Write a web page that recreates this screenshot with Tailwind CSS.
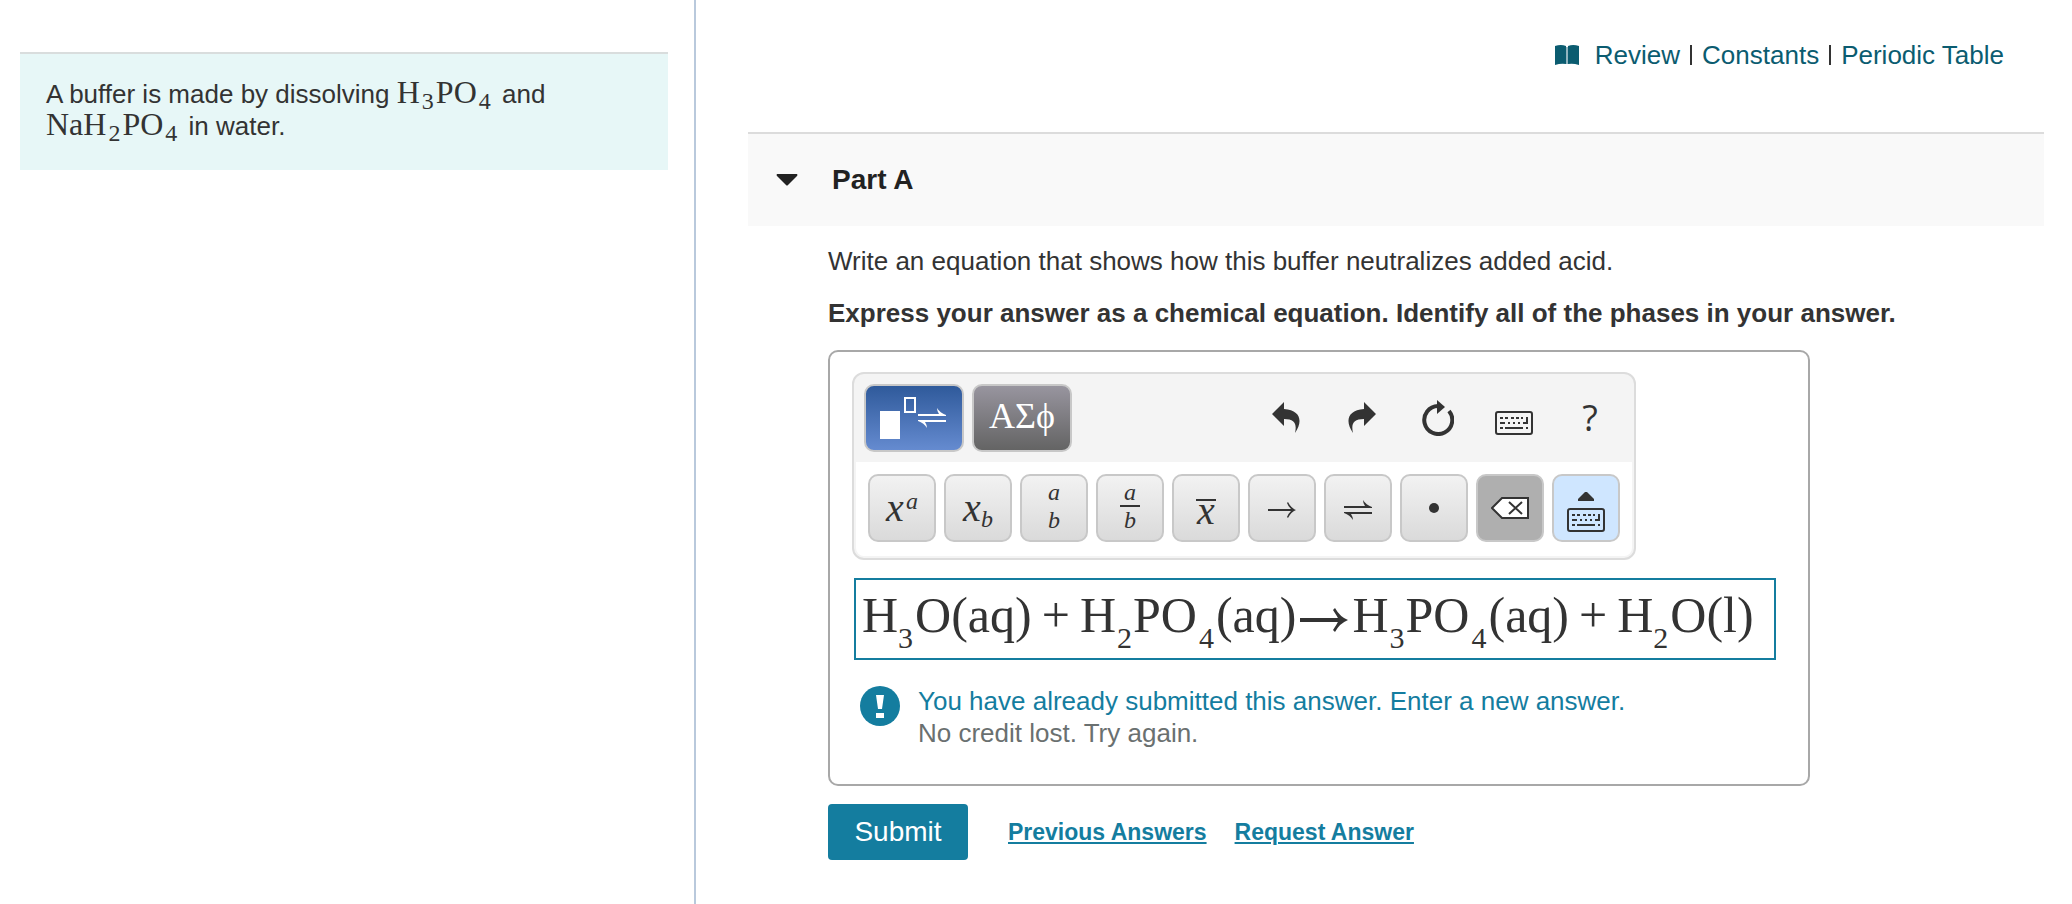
<!DOCTYPE html>
<html lang="en">
  <head>
    <meta charset="UTF-8" />
    <meta name="viewport" content="width=device-width, initial-scale=1.0" />
    <title>Part A</title>
    <script src="https://cdn.jsdelivr.net/npm/@tailwindcss/browser@4"></script>
  </head>
  <body
    class="flex min-h-screen bg-white font-['Liberation_Sans',Arial,sans-serif] text-[26px] leading-8 text-[#333]"
  >
    <!-- shared icons -->
    <svg class="hidden">
      <symbol id="keyboard" viewBox="0 0 38 24">
        <rect x="1" y="1" width="36" height="22" rx="2" fill="none" stroke="#333" stroke-width="2" />
        <path
          fill="#333"
          d="M5 6h3v2H5zM10 6h3v2h-3zM16 6h3v2h-3zM21 6h3v2h-3zM26 6h2v2h-2zM31 6h2v7h-5v-2h3zM5 11h5v2H5zM13 11h2v2h-2zM18 11h2v2h-2zM23 11h2v2h-2zM5 16h3v2H5zM10 16h18v2H10zM31 16h2v2h-2z"
        />
      </symbol>
      <symbol id="equilibrium" viewBox="0 0 30 22">
        <path fill="currentColor" d="M1 7h21q-2-3-2-6 3 5 9 7v1H1zM29 13v2H8q2 3 2 6-3-5-9-7v-1z" />
      </symbol>
    </svg>

    <aside class="w-[696px] shrink-0 border-r-2 border-[#b9c9dc] pt-13 pr-[26px] pl-5">
      <div class="border-t-2 border-[#d9dddd] bg-[#e7f7f7] px-[26px] pt-6 pb-7">
        <p>
          A buffer is made by dissolving
          <span class="font-['Liberation_Serif',serif] text-[32px] leading-6"
            >H<sub class="mx-0.5 text-2xl leading-0">3</sub>PO<sub class="mr-1 ml-0.5 text-2xl leading-0">4</sub></span
          >
          and<br />
          <span class="font-['Liberation_Serif',serif] text-[32px] leading-6"
            >NaH<sub class="mx-0.5 text-2xl leading-0">2</sub>PO<sub class="mr-1 ml-0.5 text-2xl leading-0">4</sub></span
          >
          in water.
        </p>
      </div>
    </aside>

    <main class="flex-1 pt-[39px] pr-7 pb-11 pl-[52px]">
      <nav class="flex items-center justify-end pr-10 text-[#0b5c70]">
        <svg class="mr-4 h-5 w-6" viewBox="0 0 24 20" fill="currentColor">
          <path d="M0 1q6-2 11 0v18q-5-1-11 1zM13 1q5-2 11 0v19q-6-2-11-1z" />
          <path d="M11 2h2v17h-2z" opacity=".45" />
        </svg>
        <a href="#review">Review</a>
        <span class="mx-2.5 h-5 w-0.5 bg-[#333]"></span>
        <a href="#constants">Constants</a>
        <span class="mx-2.5 h-5 w-0.5 bg-[#333]"></span>
        <a href="#periodic-table">Periodic Table</a>
      </nav>

      <button
        class="mt-[61px] flex h-[94px] w-full items-center border-t-2 border-[#dcdcdc] bg-[#f9f9f9] pl-7 text-[28px] font-bold text-[#222]"
      >
        <svg class="mr-[34px] h-3 w-[22px]" viewBox="0 0 22 12" fill="#222">
          <path d="M1 0h20q1 1 0 2l-9 9q-1 1-2 0L1 2Q0 1 1 0z" />
        </svg>
        Part A
      </button>

      <div class="mr-8 ml-20">
        <p class="mt-[19px]">Write an equation that shows how this buffer neutralizes added acid.</p>
        <p class="mt-5 font-bold">
          Express your answer as a chemical equation. Identify all of the phases in your answer.
        </p>

        <div class="mt-[21px] max-w-[982px] rounded-[10px] border-2 border-[#a8a8a8] px-[22px] pt-5 pb-[35px]">
          <div
            class="w-fit rounded-xl border-2 border-[#dcdcdc] bg-[#f4f4f4] p-0.5 font-['Liberation_Serif',serif]"
          >
            <div class="flex items-center pt-2 pr-1 pb-2.5 pl-2">
              <button
                aria-label="Templates"
                class="mr-2 flex h-[68px] w-25 items-center justify-center rounded-[10px] border-2 border-[#c8c8c8] bg-linear-to-b from-[#2f5a9b] to-[#658bd0] text-white"
              >
                <svg class="h-11 w-[68px]" viewBox="0 0 68 44">
                  <path fill="#fff" d="M0 15h20v28H0z" />
                  <path fill="none" stroke="#fff" stroke-width="2" d="M25 2h10v14H25z" />
                  <use href="#equilibrium" x="37" y="11" width="30" height="22" />
                </svg>
              </button>
              <button
                class="h-[68px] w-25 rounded-[10px] border-2 border-[#c8c8c8] bg-linear-to-b from-[#98959f] to-[#646464] pb-1 text-4xl text-white"
              >
                ΑΣϕ
              </button>
              <div class="ml-auto flex">
                <button aria-label="Undo" class="flex h-[68px] w-19 items-center justify-center">
                  <svg class="h-8 w-7" viewBox="0 0 28 32" fill="#333">
                    <path d="M0 12L12 0v7c17 1 19 13 11 24 2-9 0-14-11-14v7z" />
                  </svg>
                </button>
                <button aria-label="Redo" class="flex h-[68px] w-19 items-center justify-center">
                  <svg class="h-8 w-7" viewBox="0 0 28 32" fill="#333">
                    <path d="M28 12L16 0v7C-1 8-3 20 5 31c-2-9 0-14 11-14v7z" />
                  </svg>
                </button>
                <button aria-label="Reset" class="flex h-[68px] w-19 items-center justify-center">
                  <svg class="h-9 w-8" viewBox="0 0 32 36" fill="#333">
                    <path d="M16 6A14 14 0 1 0 27 11" fill="none" stroke="#333" stroke-width="4" />
                    <path d="M15 0l8 7-8 7z" />
                  </svg>
                </button>
                <button aria-label="Keyboard shortcuts" class="flex h-[68px] w-19 items-center justify-center pt-2.5">
                  <svg class="h-6 w-[38px]"><use href="#keyboard" /></svg>
                </button>
                <button class="h-[68px] w-19 font-['Open_Sans',sans-serif] text-4xl">?</button>
              </div>
            </div>

            <div class="flex gap-2 rounded-b-lg bg-white px-3 pt-3 pb-3.5 italic">
              <button
                class="size-17 rounded-[10px] border-2 border-[#c8c8c8] bg-linear-to-b from-[#f2f2f2] to-[#dadada] text-[40px]"
              >
                x<sup class="ml-0.5 text-2xl leading-0">a</sup>
              </button>
              <button
                class="size-17 rounded-[10px] border-2 border-[#c8c8c8] bg-linear-to-b from-[#f2f2f2] to-[#dadada] text-[40px]"
              >
                x<sub class="text-2xl leading-0">b</sub>
              </button>
              <button
                class="flex size-17 flex-col items-center justify-center rounded-[10px] border-2 border-[#c8c8c8] bg-linear-to-b from-[#f2f2f2] to-[#dadada] pb-1 text-2xl leading-7"
              >
                <span>a</span>
                <span>b</span>
              </button>
              <button
                class="flex size-17 flex-col items-center justify-center rounded-[10px] border-2 border-[#c8c8c8] bg-linear-to-b from-[#f2f2f2] to-[#dadada] pb-1 text-2xl leading-[26px]"
              >
                <span>a</span>
                <span class="w-5 border-t-2 border-[#333]">b</span>
              </button>
              <button
                class="flex size-17 items-center justify-center rounded-[10px] border-2 border-[#c8c8c8] bg-linear-to-b from-[#f2f2f2] to-[#dadada] pt-1 text-[40px] leading-5"
              >
                <span class="w-5 border-t-2 border-[#333]">x</span>
              </button>
              <button
                aria-label="Reaction arrow"
                class="flex size-17 items-center justify-center rounded-[10px] border-2 border-[#c8c8c8] bg-linear-to-b from-[#f2f2f2] to-[#dadada] pt-1"
              >
                <svg class="h-4 w-[30px]" viewBox="0 0 30 16" fill="#333">
                  <path d="M1 7h23q-3-3-4-6l1-1q3 6 8 8-5 2-8 8l-1-1q1-3 4-6H1z" />
                </svg>
              </button>
              <button
                aria-label="Equilibrium arrows"
                class="flex size-17 items-center justify-center rounded-[10px] border-2 border-[#c8c8c8] bg-linear-to-b from-[#f2f2f2] to-[#dadada] pt-1"
              >
                <svg class="h-[22px] w-[30px]"><use href="#equilibrium" /></svg>
              </button>
              <button
                aria-label="Dot"
                class="flex size-17 items-center justify-center rounded-[10px] border-2 border-[#c8c8c8] bg-linear-to-b from-[#f2f2f2] to-[#dadada]"
              >
                <span class="size-2.5 rounded-full bg-[#333]"></span>
              </button>
              <button
                aria-label="Backspace"
                class="flex size-17 items-center justify-center rounded-[10px] border-2 border-[#c8c8c8] bg-[#afafaf]"
              >
                <svg class="h-[22px] w-[38px]" viewBox="0 0 38 22" stroke="#333" stroke-width="2">
                  <path fill="#fff" d="M1 11L11 1h26v20H11z" />
                  <path d="M18 5l13 12M31 5L18 17" />
                </svg>
              </button>
              <button
                aria-label="Show keyboard"
                class="flex size-17 flex-col items-center justify-center gap-[7px] rounded-[10px] border-2 border-[#c8c8c8] bg-[#cfe6ff] pt-2"
              >
                <svg class="h-[9px] w-4" viewBox="0 0 16 9" fill="#333">
                  <path d="M7 0h2l7 7v2H0V7z" />
                </svg>
                <svg class="h-6 w-[38px]"><use href="#keyboard" /></svg>
              </button>
            </div>
          </div>

          <div
            role="textbox"
            aria-label="Answer"
            contenteditable="true"
            class="mt-[18px] mr-2.5 ml-0.5 flex h-[82px] items-baseline border-2 border-[#147d9f] pt-2.5 pl-1.5 font-['Liberation_Serif',serif] text-[50px] leading-none whitespace-nowrap"
          >
            <span>H<sub class="mr-0.5 align-[-8px] text-3xl leading-0">3</sub>O(aq)</span>
            <span class="mx-2.5">+</span>
            <span
              >H<sub class="mx-px align-[-8px] text-3xl leading-0">2</sub>PO<sub
                class="mx-0.5 align-[-8px] text-3xl leading-0"
                >4</sub
              >(aq)</span
            >
            <svg class="mx-1 mb-1 h-6 w-12" viewBox="0 0 48 24" fill="#333">
              <path d="M0 10h44v4H0z" />
              <path d="M35 0q5 9 13 12-8 3-13 12l-2-2q4-6 6-10-2-4-6-10z" />
            </svg>
            <span
              >H<sub class="mx-px align-[-8px] text-3xl leading-0">3</sub>PO<sub
                class="mx-0.5 align-[-8px] text-3xl leading-0"
                >4</sub
              >(aq)</span
            >
            <span class="mx-2.5">+</span>
            <span>H<sub class="mr-0.5 align-[-8px] text-3xl leading-0">2</sub>O(l)</span>
          </div>

          <div class="mt-[25px] flex gap-[18px] pl-2">
            <svg class="mt-px size-10" viewBox="0 0 40 40">
              <circle cx="20" cy="20" r="20" fill="#147d9f" />
              <path fill="#fff" d="M16 9h8l-2 14h-4zM16 27h8v5h-8z" />
            </svg>
            <div>
              <p class="text-[#147d9f]">You have already submitted this answer. Enter a new answer.</p>
              <p class="text-[#6a7070]">No credit lost. Try again.</p>
            </div>
          </div>
        </div>

        <div class="mt-[18px] flex items-center text-[23px] font-bold text-[#147d9f]">
          <button class="mr-10 h-14 w-35 rounded-sm bg-[#147d9f] text-[28px] font-normal text-white">
            Submit
          </button>
          <a href="#previous" class="mr-7 underline decoration-2 underline-offset-2">Previous Answers</a>
          <a href="#request" class="underline decoration-2 underline-offset-2">Request Answer</a>
        </div>
      </div>
    </main>
  </body>
</html>
